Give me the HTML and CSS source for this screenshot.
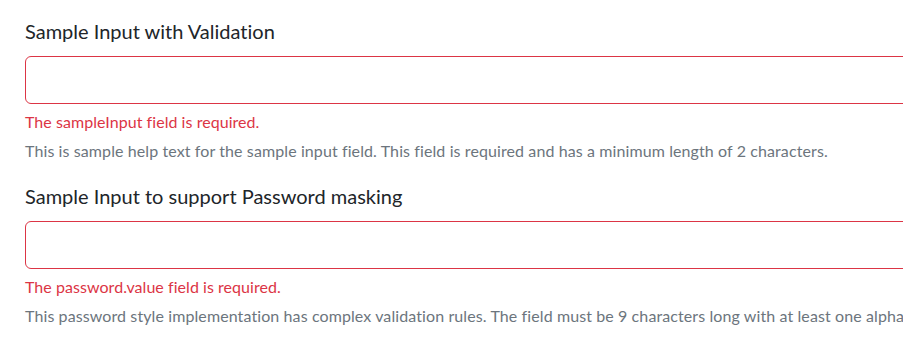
FILE: index.html
```html
<!DOCTYPE html>
<html lang="en">
<head>
<meta charset="utf-8">
<title>Sample Inputs</title>
<link rel="stylesheet" href="styles.css">
</head>
<body>
<div class="page">
  <div class="field">
    <label class="field-label" for="sampleInput">Sample Input with Validation</label>
    <input class="field-input is-invalid" id="sampleInput" type="text">
    <div class="field-error">The sampleInput field is required.</div>
    <div class="field-help">This is sample help text for the sample input field. This field is required and has a minimum length of 2 characters.</div>
  </div>
  <div class="field">
    <label class="field-label" for="password">Sample Input to support Password masking</label>
    <input class="field-input is-invalid" id="password" type="password">
    <div class="field-error">The password.value field is required.</div>
    <div class="field-help">This password style implementation has complex validation rules. The field must be 9 characters long with at least one alphabetic character, one number and one special character.</div>
  </div>
</div>
</body>
</html>
```
FILE: styles.css
```css
html, body {
  margin: 0;
  padding: 0;
  background: #fff;
  overflow: hidden;
}
body {
  font-family: "Segoe UI", Lato, "Noto Sans", sans-serif;
  font-variant-ligatures: none;
  color: #212529;
}
.page {
  width: 1200px;
  padding: 16px 0 0 25px;
}
.field {
  display: flex;
  flex-direction: column;
  margin-bottom: 18px;
}
.field-label {
  font-size: 20px;
  line-height: 30px;
  margin-bottom: 10px;
}
.field-input {
  box-sizing: border-box;
  height: 48px;
  width: 100%;
  border: 1px solid #dc3545;
  border-radius: 6px;
  background: #fff;
  padding: 8px 16px;
  font-size: 20px;
  outline: none;
}
.field-error {
  color: #dc3545;
  font-size: 16px;
  line-height: 24px;
  margin-top: 6px;
  letter-spacing: 0.05px;
}
.field-help {
  color: #6c757d;
  font-size: 16px;
  line-height: 24px;
  margin-top: 5px;
  letter-spacing: 0.1px;
  white-space: nowrap;
}
```
